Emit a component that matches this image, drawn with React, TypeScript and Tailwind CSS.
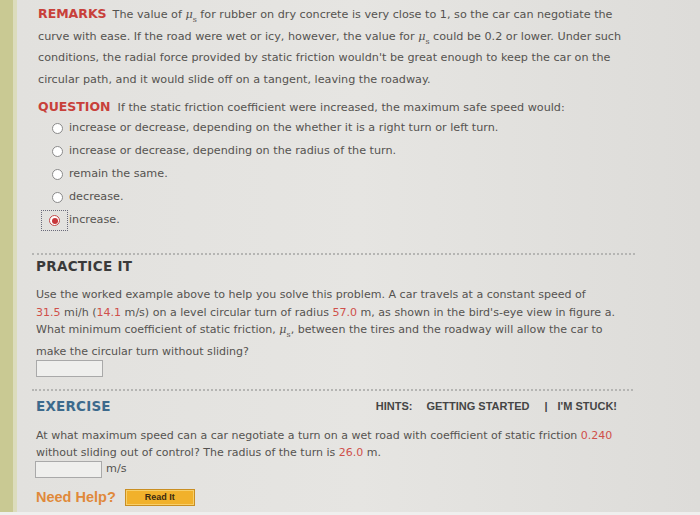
import React from "react";

const Mu = ({ sub = "s" }: { sub?: string }) => (
  <span className="inline-block relative" style={{ fontFamily: "'DejaVu Serif', serif" }}>
    <span className="italic">μ</span>
    <sub className="text-[8px] relative top-[1px] align-sub">{sub}</sub>
  </span>
);

const Radio = ({ checked = false }: { checked?: boolean }) => (
  <span
    className={
      "inline-flex items-center justify-center w-[11px] h-[11px] rounded-full border bg-white " +
      (checked ? "border-[#c04848]" : "border-[#8a8a8a]")
    }
  >
    {checked && <span className="w-[6px] h-[6px] rounded-full bg-[#c8363a]" />}
  </span>
);

const Red = ({ children }: { children: React.ReactNode }) => (
  <span className="text-[#d0504a]">{children}</span>
);

const Dotted = ({ w, mt }: { w: string; mt: string }) => (
  <div className={"border-t-2 border-dotted border-[#b5b5b3] " + w + " " + mt} />
);

export default function App() {
  const body = "text-[#555350] text-[11.2px]";
  const arial = { fontFamily: "'Liberation Sans', Arial, sans-serif" };
  return (
    <div
      className="w-[700px] h-[515px] overflow-hidden flex flex-col bg-[#e3e2df]"
      style={{ fontFamily: "'DejaVu Sans', Verdana, sans-serif" }}
    >
      <div className="flex-1 flex">
        <div className="w-[13px] bg-[#c9c993]" />
        <div className="w-[4px] bg-[#dcdcbc]" />
        <div className="flex-1 flex flex-col pl-[15px] bg-gradient-to-r from-[#e2e1de] via-[#e6e5e2] to-[#dddcd9]">
          {/* REMARKS */}
          <div className={body + " pl-[6px] pt-[3px] leading-[21.5px]"}>
            <div className="whitespace-nowrap">
              <span className="text-[#c8403a] font-bold text-[12.5px] mr-[6px]">REMARKS</span>
              The value of <Mu /> for rubber on dry concrete is very close to 1, so the car can negotiate the
            </div>
            <div className="whitespace-nowrap">
              curve with ease. If the road were wet or icy, however, the value for <Mu /> could be 0.2 or lower. Under such
            </div>
            <div className="whitespace-nowrap">
              conditions, the radial force provided by static friction wouldn't be great enough to keep the car on the
            </div>
            <div className="whitespace-nowrap">circular path, and it would slide off on a tangent, leaving the roadway.</div>
          </div>

          {/* QUESTION */}
          <div className={body + " pl-[6px] mt-[8px]"}>
            <div className="whitespace-nowrap leading-[18px]">
              <span className="text-[#c8403a] font-bold text-[12.5px] mr-[7px]">QUESTION</span>
              If the static friction coefficient were increased, the maximum safe speed would:
            </div>
            <div className="flex flex-col pl-[14px]">
              {[
                "increase or decrease, depending on the whether it is a right turn or left turn.",
                "increase or decrease, depending on the radius of the turn.",
                "remain the same.",
                "decrease.",
              ].map((t, i) => (
                <div key={i} className="flex items-center gap-[6px] h-[23px] whitespace-nowrap">
                  <Radio />
                  <span>{t}</span>
                </div>
              ))}
              <div className="flex items-center gap-[1px] h-[23px] whitespace-nowrap">
                <span className="ml-[-11px] border border-dotted border-[#6a6a7a] px-[7px] py-[4px] flex items-center">
                  <Radio checked />
                </span>
                <span>increase.</span>
              </div>
            </div>
          </div>

          <Dotted w="w-[603px]" mt="mt-[21px]" />

          {/* PRACTICE IT */}
          <div className="pl-[4px]">
            <div className="mt-[2px] leading-[18px] text-[13.5px] font-bold text-[#3a3a3a] tracking-[0.3px]">
              PRACTICE IT
            </div>
            <div className="text-[#555350] text-[11.05px] mt-[11px] leading-[17.5px]">
              <div className="whitespace-nowrap">
                Use the worked example above to help you solve this problem. A car travels at a constant speed of
              </div>
              <div className="whitespace-nowrap">
                <Red>31.5</Red> mi/h (<Red>14.1</Red> m/s) on a level circular turn of radius <Red>57.0</Red> m, as shown in the bird's-eye view in figure a.
              </div>
              <div className="whitespace-nowrap">
                What minimum coefficient of static friction, <Mu />, between the tires and the roadway will allow the car to
              </div>
              <div className="whitespace-nowrap mt-[4px] leading-[17px]">make the circular turn without sliding?</div>
            </div>
            <div className="w-[67px] h-[17px] border border-[#a9a9a9] bg-[#efefed]" />
          </div>

          <Dotted w="w-[601px]" mt="mt-[12px]" />

          {/* EXERCISE */}
          <div className="pl-[4px]">
            <div className="mt-[7px] flex items-center h-[18px] w-[581px]">
              <div className="text-[13.5px] font-bold text-[#3d6a8c] tracking-[0.2px]">EXERCISE</div>
              <div className="flex-1" />
              <div className="flex items-center text-[11px] font-bold text-[#454545] whitespace-nowrap" style={arial}>
                <span>HINTS:</span>
                <span className="ml-[14px]">GETTING STARTED</span>
                <span className="ml-[15px]">|</span>
                <span className="ml-[10px]">I'M STUCK!</span>
              </div>
            </div>
            <div className="text-[#555350] text-[11px] mt-[11px] leading-[17px]">
              <div className="whitespace-nowrap">
                At what maximum speed can a car negotiate a turn on a wet road with coefficient of static friction <Red>0.240</Red>
              </div>
              <div className="whitespace-nowrap">
                without sliding out of control? The radius of the turn is <Red>26.0</Red> m.
              </div>
            </div>
            <div className={body + " flex items-center ml-[-1px]"}>
              <div className="w-[67px] h-[17px] border border-[#a9a9a9] bg-[#efefed]" />
              <span className="ml-[4px]">m/s</span>
            </div>
            <div className="mt-[11px] flex items-center h-[18px]" style={arial}>
              <span className="text-[14.5px] font-bold text-[#e0893a]">Need Help?</span>
              <span className="ml-[9px] w-[70px] h-[17px] flex items-center justify-center bg-[#f1b12b] border border-[#c98e22] shadow-[inset_0_0_0_1px_#f7cf6a] text-[9px] font-bold text-[#3a2a10]">
                Read It
              </span>
            </div>
          </div>
        </div>
      </div>
      <div className="h-[3px] bg-[#efefee]" />
    </div>
  );
}
